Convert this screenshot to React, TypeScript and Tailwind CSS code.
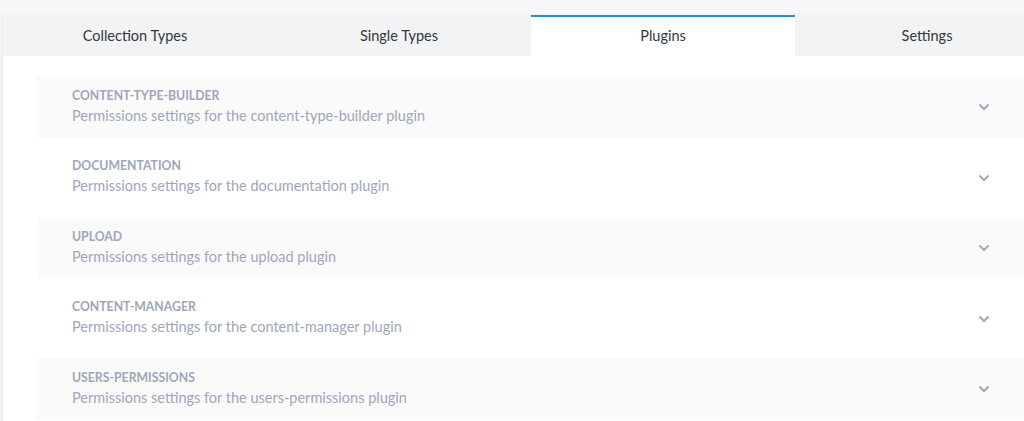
import React from 'react';

const TABS = ['Collection Types', 'Single Types', 'Plugins', 'Settings'];
const ACTIVE = 2;

const PLUGINS = [
  'content-type-builder',
  'documentation',
  'upload',
  'content-manager',
  'users-permissions',
];

function Chevron() {
  return (
    <svg width="12" height="8" viewBox="0 0 12 8" fill="none">
      <path d="M1.5 1.5 L6 6 L10.5 1.5" stroke="#9ea7b8" strokeWidth="2" />
    </svg>
  );
}

export default function App() {
  return (
    <div className="h-[421px] w-[1024px] overflow-hidden bg-[#f7f7f9] pt-[15px] pl-[3px] font-['Lato','Noto_Sans',sans-serif]">
      <div className="w-[1056px] bg-white shadow-[-2px_0_3px_#e8eef6]">
        <div className="flex h-[41px] bg-[#f2f3f5]">
          {TABS.map((t, i) => (
            <div
              key={t}
              className={
                'flex w-[264px] items-center justify-center text-[14.5px] text-[#333740] ' +
                (i === ACTIVE ? 'border-t-2 border-[#1c91e7] bg-white pb-[2px]' : '')
              }
            >
              {t}
            </div>
          ))}
        </div>
        <div className="flex flex-col gap-[10.5px] px-[34px] pt-[21px] pb-[20px]">
          {PLUGINS.map((p, i) => (
            <div
              key={p}
              className={
                'flex h-[60px] items-center justify-between pl-[35px] pr-[35px] ' +
                (i % 2 === 0 ? 'bg-[#fafafb]' : 'bg-white')
              }
            >
              <div className="-mt-[2px] flex flex-col">
                <span className="text-[12.25px] font-bold uppercase leading-[16px] text-[#9ea7b8]">{p}</span>
                <span className="mt-[3px] text-[14.5px] leading-[18px] text-[#9ea7b8]">
                  Permissions settings for the {p} plugin
                </span>
              </div>
              <Chevron />
            </div>
          ))}
        </div>
      </div>
    </div>
  );
}
